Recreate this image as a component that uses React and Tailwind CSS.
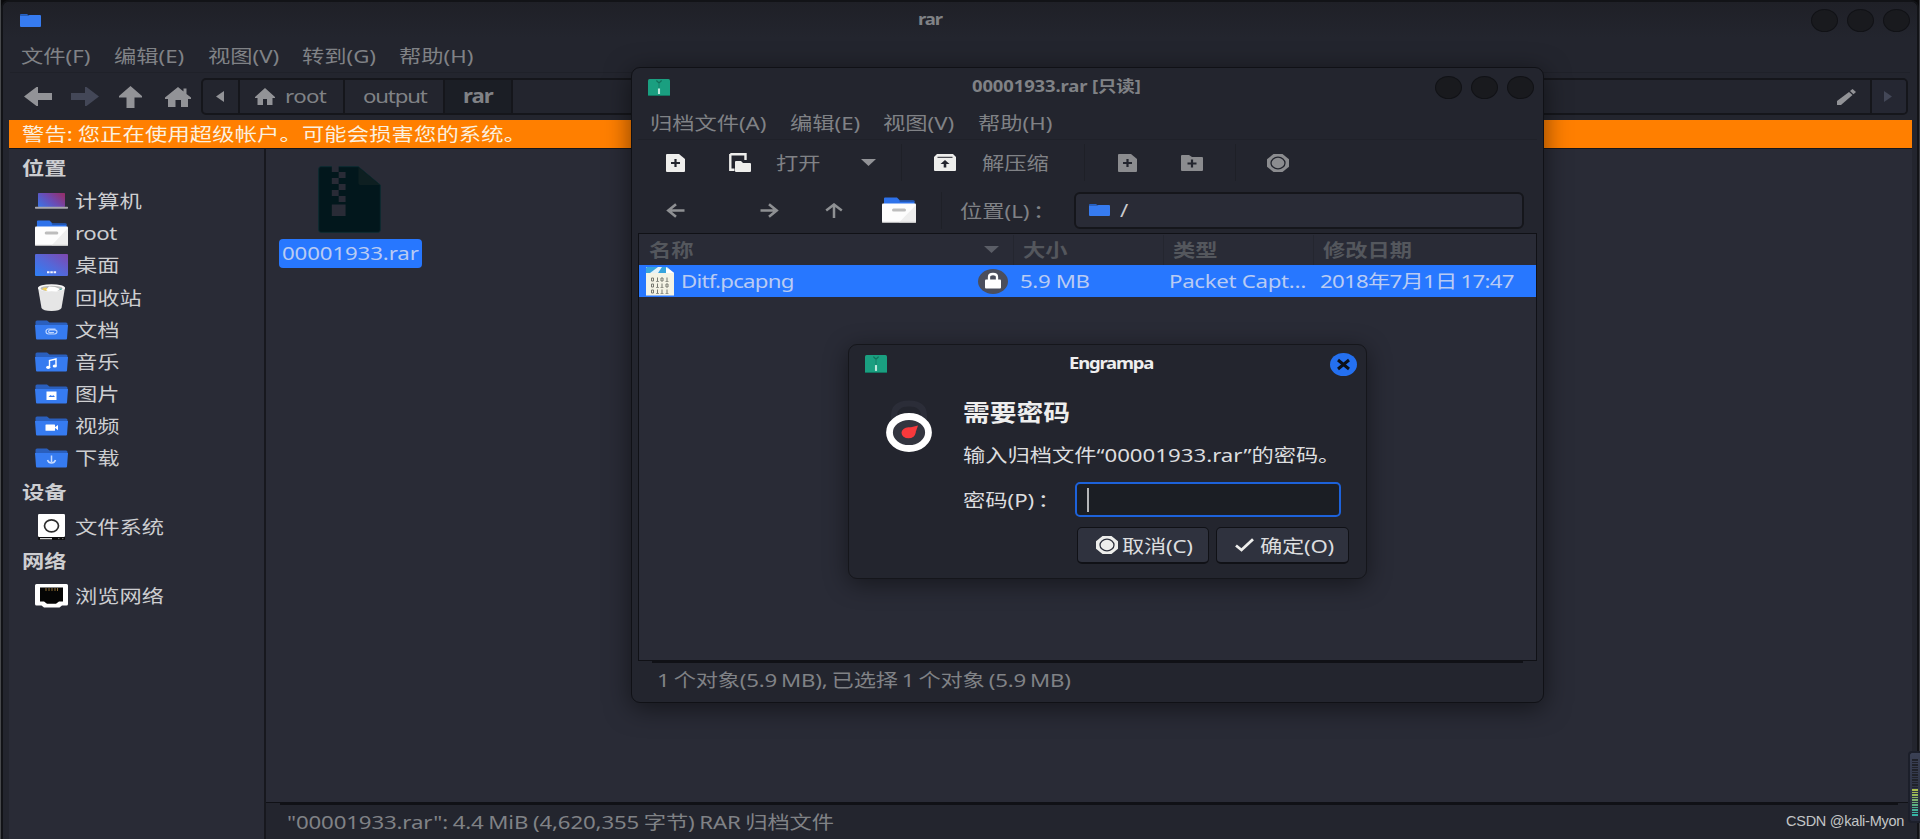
import React from "react";

/* Horizontally widened text used across the desktop. */
function T({ children, className = "" }) {
  return (
    <span className={`block shrink-0 whitespace-nowrap leading-none ${className}`}>
      <span className="block w-max origin-left scale-x-[1.19]">{children}</span>
    </span>
  );
}

function Svg({ className, box, children }) {
  return (
    <svg className={`block shrink-0 ${className}`} viewBox={box} preserveAspectRatio="none">
      {children}
    </svg>
  );
}

function SmallFolder({ className }) {
  return (
    <Svg className={className} box="0 0 21 12">
      <path d="M0 1Q0 0 1 0H7L9 1.5H0Z" fill="#2460c4" />
      <path d="M0 1.5H8L9.5 1H20Q21 1 21 2V11Q21 12 20 12H1Q0 12 0 11Z" fill="#367bf0" />
    </Svg>
  );
}

function ZipIcon({ className }) {
  return (
    <Svg className={className} box="0 0 21 17">
      <rect width="21" height="17" rx="1.5" fill="#1a9f80" />
      <rect y="16" width="21" height="1" rx=".5" fill="#127560" />
      <path d="M8 1.500L10.5 4L13 1.500" fill="none" stroke="#11705a" strokeWidth="1.2" />
      <path d="M10.5 4V9.500" stroke="#168a70" strokeWidth="1.4" />
      <rect x="9.500" y="9.500" width="2" height="5.500" fill="#bfe8dc" />
    </Svg>
  );
}

function HomeFolder({ className }) {
  return (
    <Svg className={className} box="0 0 34 26">
      <path d="M2 10V1.5Q2 .5 3 .5H15L18 3.5H31Q32.500 3.500 32.500 5V10Z" fill="#2e72ea" />
      <path d="M17 3.500H32.500V5H18Z" fill="#2157b4" />
      <rect y="6.500" width="34" height="19" rx="1" fill="#fdfdfd" />
      <path d="M34 8V25.500H17Z" fill="#eeeeee" />
      <rect y="24.800" width="34" height=".9" fill="#c9c9c9" />
      <rect x="10" y="11.500" width="14" height="3" rx="1.500" fill="#bdbdbd" />
    </Svg>
  );
}

function BlueFolder({ children }) {
  return (
    <Svg className="h-[20px] w-[33px]" box="0 0 33 20">
      <path d="M.5 7V2Q.5 .5 2 .5H12L14.500 2.500H31Q32.500 2.500 32.500 4V7Z" fill="#2a5fbd" />
      <path d="M0 5H33L32 18.500Q32 19.500 31 19.500H2Q1 19.500 1 18.500Z" fill="#367bf0" />
      <g>{children}</g>
    </Svg>
  );
}

function ComputerIcon() {
  return (
    <Svg className="h-[16px] w-[33px]" box="0 0 33 16">
      <defs>
        <linearGradient id="pc" x1="0" x2="1" y1=".8" y2=".2">
          <stop offset="0" stopColor="#3f6fe0" />
          <stop offset=".5" stopColor="#6b4bb4" />
          <stop offset="1" stopColor="#92306f" />
        </linearGradient>
      </defs>
      <rect x="3" y="0" width="27" height="14" rx=".8" fill="url(#pc)" />
      <rect y="13.800" width="33" height="1.900" rx=".6" fill="#a8a8ae" />
    </Svg>
  );
}

function DesktopIcon() {
  return (
    <Svg className="h-[22px] w-[33px]" box="0 0 33 22">
      <defs>
        <linearGradient id="dk" x1="0" x2="1" y1="1" y2="0">
          <stop offset="0" stopColor="#2d80f6" />
          <stop offset=".5" stopColor="#5567d8" />
          <stop offset="1" stopColor="#8047ae" />
        </linearGradient>
      </defs>
      <rect width="33" height="22" rx="1" fill="url(#dk)" />
      <path d="M12 18.300H14.500M15.300 18.300H17.800M18.600 18.300H21.100" stroke="#f4f4ff" strokeWidth="2" />
    </Svg>
  );
}

function TrashIcon() {
  return (
    <Svg className="h-[27px] w-[27px]" box="0 0 27 27">
      <path d="M0 3.500H27L23.500 24Q22 27 13.500 27T3.500 24Z" fill="#e6e6e6" />
      <ellipse cx="13.500" cy="4" rx="13.500" ry="3.800" fill="#f7f7f7" />
      <ellipse cx="13.500" cy="4.500" rx="11" ry="2.700" fill="#b9b9b9" />
      <path d="M4 5.500L6 3.500L9 4V7Z" fill="#f2cf57" />
      <path d="M8 6L11 2.500L17 3L22 5L19 7.300H10Z" fill="#ffffff" />
      <path d="M21 5L24 4.500L23 6.300Z" fill="#3fb3a4" />
    </Svg>
  );
}

function DriveIcon() {
  return (
    <Svg className="h-[26px] w-[27px]" box="0 0 27 26">
      <rect y="20" width="27" height="6" rx="1" fill="#0b0b0d" />
      <rect width="27" height="23" rx="1.200" fill="#fff" />
      <rect x="2" y="24" width="12" height="1.300" fill="#d0d0d0" />
      <path d="M20 24.600H21.500M24 24.600H25.500" stroke="#777" />
      <ellipse cx="13.500" cy="11.800" rx="7" ry="6" fill="none" stroke="#2d2d2d" strokeWidth="1.700" />
    </Svg>
  );
}

function NetworkIcon() {
  return (
    <Svg className="h-[24px] w-[33px]" box="0 0 33 24">
      <path d="M1.500 0H31.500Q33 0 33 1.500V20Q33 21.500 31.500 21.500H27L24.500 23.500H9L6.500 21.500H1.500Q0 21.500 0 20V1.500Q0 0 1.500 0Z" fill="#fff" />
      <path d="M5 3.500H28V17.500H24L21 19.800H12L9 17.500H5Z" fill="#050505" />
      <path d="M11 4V7M14 4V7M17 4V7M20 4V7M22.500 4V7" stroke="#8a6a32" strokeWidth="1" />
    </Svg>
  );
}

function ArrowThin({ className }) {
  return (
    <Svg className={className} box="0 0 19 15">
      <path d="M10 1.200L2.300 7.500L10 13.800M2 7.500H18.500" fill="none" stroke="#8e9093" strokeWidth="2.600" />
    </Svg>
  );
}

function StopIcon({ className, fill, gap }) {
  return (
    <Svg className={className} box="0 0 22 18">
      <path d="M6.500 0H15.500L22 5.300V12.700L15.500 18H6.500L0 12.700V5.300Z" fill={fill} />
      <ellipse cx="11" cy="9" rx="7" ry="5.800" fill="none" stroke={gap} strokeWidth="1.300" />
    </Svg>
  );
}

function WinButtons({ className }) {
  return (
    <div className={`flex shrink-0 gap-[9px] ${className}`}>
      <i className="h-[23px] w-[27px] rounded-[50%] border border-[#111216] bg-[#191a1e]" />
      <i className="h-[23px] w-[27px] rounded-[50%] border border-[#111216] bg-[#191a1e]" />
      <i className="h-[23px] w-[27px] rounded-[50%] border border-[#111216] bg-[#191a1e]" />
    </div>
  );
}

function Place({ icon, label, className }) {
  return (
    <div className={`flex shrink-0 items-center ${className}`}>
      <div className="ml-[26px] flex w-[33px] shrink-0 justify-center">{icon}</div>
      <T className="ml-[7px] pt-px">{label}</T>
    </div>
  );
}

function Sidebar() {
  return (
    <div className="flex w-[257px] shrink-0 flex-col border-r-2 border-[#17181e] text-[#cdced1]">
      <div className="mt-[3px] flex h-[32px] shrink-0 items-center">
        <T className="ml-[13px] pt-px font-bold">位置</T>
      </div>
      <Place className="h-[34px]" icon={<ComputerIcon />} label="计算机" />
      <Place className="h-[30px] tracking-[-0.4px]" icon={<HomeFolder className="h-[26px] w-[33px]" />} label="root" />
      <Place className="h-[34px]" icon={<DesktopIcon />} label="桌面" />
      <Place className="h-[31px]" icon={<TrashIcon />} label="回收站" />
      <Place
        className="h-[33px]"
        icon={
          <BlueFolder>
            <path d="M20.500 9H13.500Q11 9.200 11 11.500T13.500 14H19.500Q22 13.700 22 11.800T19.500 9.800L15 10Q13.600 10.300 13.600 11.500T15 12.600L19 12.500" fill="none" stroke="#bcd4ff" strokeWidth="1.200" />
          </BlueFolder>
        }
        label="文档"
      />
      <Place
        className="h-[32px]"
        icon={
          <BlueFolder>
            <path d="M14.500 15V8.500L21 7V13.800" fill="none" stroke="#fff" strokeWidth="1.400" />
            <ellipse cx="13.200" cy="15.300" rx="2.100" ry="1.600" fill="#fff" />
            <ellipse cx="19.800" cy="14" rx="2.100" ry="1.600" fill="#fff" />
          </BlueFolder>
        }
        label="音乐"
      />
      <Place
        className="h-[32px]"
        icon={
          <BlueFolder>
            <rect x="11.500" y="7.500" width="10" height="8.500" fill="#fff" />
            <path d="M13.500 13L15.500 11L17 12L18.500 11.200L20 13Z" fill="#367bf0" />
          </BlueFolder>
        }
        label="图片"
      />
      <Place
        className="h-[32px]"
        icon={
          <BlueFolder>
            <rect x="10.500" y="8.500" width="9.500" height="6.300" rx=".6" fill="#fff" />
            <path d="M19.500 11.500L23 9V14.300Z" fill="#fff" />
          </BlueFolder>
        }
        label="视频"
      />
      <Place
        className="h-[32px]"
        icon={
          <BlueFolder>
            <path d="M16.500 7.500V14M12.500 12Q13.500 15 16.500 15T20.500 12" fill="none" stroke="#c9dcff" strokeWidth="1.500" />
          </BlueFolder>
        }
        label="下载"
      />
      <div className="flex h-[36px] shrink-0 items-center">
        <T className="ml-[13px] pt-px font-bold">设备</T>
      </div>
      <Place className="h-[34px]" icon={<DriveIcon />} label="文件系统" />
      <div className="flex h-[34px] shrink-0 items-center">
        <T className="ml-[13px] pt-px font-bold">网络</T>
      </div>
      <Place className="h-[36px]" icon={<NetworkIcon />} label="浏览网络" />
    </div>
  );
}

function RarFile() {
  return (
    <div className="ml-[13px] mt-[17px] flex w-[143px] flex-col items-center">
      <Svg className="-ml-[3px] h-[67px] w-[63px]" box="0 0 64 67">
        <path d="M3 .7H41L63.300 19V64Q63.300 66.300 61 66.300H3Q.7 66.300 .7 64V3Q.7 .7 3 .7Z" fill="#02171c" stroke="#0c2b30" />
        <path d="M41 1L63 19H43Q41 19 41 17Z" fill="#0e1f21" />
        <path d="M14 -1H21V6H14ZM21 6H28V12H21ZM14 12H21V18H14ZM21 18H28V24H21ZM14 24H21V30H14ZM21 30H28V36H21ZM14 38.500H28V50H14Z" fill="#292b36" />
      </Svg>
      <div className="mt-[6px] flex h-[29px] w-[143px] items-center rounded-[4px] bg-[#2777ff] text-[#b9cbf3]">
        <T className="ml-[3px] tracking-[-0.100px]">00001933.rar</T>
      </div>
    </div>
  );
}

function FileManager() {
  return (
    <div className="flex h-[839px] w-[1918px] flex-col overflow-hidden rounded-t-[8px] border-x-2 border-t-2 border-[#121317] bg-[#23252e] text-[#808286]">
      <div className="flex h-[36px] shrink-0 items-center bg-gradient-to-b from-[#1f2027] to-[#23252e]">
        <SmallFolder className="ml-[17px] h-[13px] w-[21px]" />
        <T className="ml-[877px] w-[23px] text-[15.500px] font-bold tracking-[-0.900px]">rar</T>
        <WinButtons className="ml-[870px]" />
      </div>
      <div className="flex h-[34px] shrink-0 items-center pt-[2px]">
        <T className="ml-[18px] w-[93px]">文件(F)</T>
        <T className="w-[94px]">编辑(E)</T>
        <T className="w-[94px]">视图(V)</T>
        <T className="w-[97px]">转到(G)</T>
        <T>帮助(H)</T>
      </div>
      <div className="ml-[7px] mr-[7px] h-px shrink-0 bg-[#1f2129]" />
      <div className="mt-[5px] flex h-[37px] shrink-0 items-center">
        <Svg className="ml-[21px] h-[19px] w-[28px]" box="0 0 28 19">
          <path d="M0 9.500L12.500 0H14V6H28V13H14V19H12.500Z" fill="#929397" />
        </Svg>
        <Svg className="ml-[19px] h-[19px] w-[28px]" box="0 0 28 19">
          <path d="M28 9.500L15.500 0H14V6H0V13H14V19H15.500Z" fill="#434757" />
        </Svg>
        <Svg className="ml-[20px] h-[22px] w-[23px]" box="0 0 23 22">
          <path d="M11.500 0L23 10V11.500H15.500V22H7.500V11.500H0V10Z" fill="#929397" />
        </Svg>
        <Svg className="ml-[23px] h-[20px] w-[26px]" box="0 0 26 20">
          <path d="M13 0L18.500 4.500V1.500H21.500V7L26 10.500V12H23V20H16V13H10.500V20H3V12H0V10.500Z" fill="#929397" />
        </Svg>
        <div className="ml-[10px] flex h-[37px] w-[1707px] items-stretch overflow-hidden rounded-[5px] border-2 border-[#15161b]">
          <div className="flex w-[37px] items-center border-r-2 border-[#15161b]">
            <Svg className="ml-[13px] h-[11px] w-[8px]" box="0 0 8 11">
              <path d="M8 0V11L0 5.500Z" fill="#929397" />
            </Svg>
          </div>
          <div className="flex w-[105px] items-center border-r-2 border-[#15161b]">
            <Svg className="ml-[15px] h-[17px] w-[20px]" box="0 0 20 17">
              <path d="M10 0L20 9V10H17.500V17H12V11H8V17H2.500V10H0V9Z" fill="#929397" />
            </Svg>
            <T className="ml-[10px] tracking-[-0.500px]">root</T>
          </div>
          <div className="flex w-[100px] items-center border-r-2 border-[#15161b]">
            <T className="ml-[18px] tracking-[-1px]">output</T>
          </div>
          <div className="flex w-[68px] items-center border-r-2 border-[#15161b] bg-[#1b1e25]">
            <T className="ml-[18px] font-bold tracking-[-0.900px]">rar</T>
          </div>
          <div className="flex flex-1 items-center justify-end">
            <Svg className="mr-[14px] h-[16px] w-[19px]" box="0 0 19 16">
              <path d="M0 12L12 3L15.500 6L4 16H0Z" fill="#929397" />
              <path d="M13 2L15.500 0L19 3L16.500 5.200Z" fill="#929397" />
            </Svg>
          </div>
          <div className="flex w-[36px] items-center border-l-2 border-[#15161b] bg-[#252732]">
            <Svg className="ml-[12px] h-[11px] w-[8px]" box="0 0 8 11">
              <path d="M0 0V11L8 5.500Z" fill="#434757" />
            </Svg>
          </div>
        </div>
      </div>
      <div className="mx-[6px] mt-[5px] flex h-[28px] w-[1903px] shrink-0 items-center bg-[#ff7f00] text-[#fbefdf]">
        <T className="ml-[13px] tracking-[0.150px] [word-spacing:-1px]">警告: 您正在使用超级帐户。可能会损害您的系统。</T>
      </div>
      <div className="mx-[6px] flex min-h-0 w-[1903px] flex-1 border-t border-[#15161b] bg-[#292b36]">
        <Sidebar />
        <div className="flex min-w-0 flex-1 flex-col">
          <div className="min-h-0 flex-1">
            <RarFile />
          </div>
          <div className="flex h-[37px] shrink-0 flex-col border-t border-[#101116] bg-[#23252e]">
            <div className="mx-[14px] h-[2px] shrink-0 bg-[#101116]" />
            <T className="ml-[21px] mt-[8px] tracking-[-0.120px] [word-spacing:-0.800px]">"00001933.rar": 4.4 MiB (4,620,355 字节) RAR 归档文件</T>
          </div>
        </div>
      </div>
    </div>
  );
}

function Sep({ className }) {
  return <div className={`h-[37px] w-px shrink-0 bg-[#1e2027] ${className}`} />;
}

function ArchiveWindow() {
  return (
    <div className="absolute left-[631px] top-[67px] flex h-[636px] w-[913px] flex-col rounded-[9px] border border-[#101116] bg-[#23252e] text-[#808286] shadow-[0_5px_26px_rgba(0,0,0,0.5)]">
      <div className="flex h-[38px] shrink-0 items-center">
        <ZipIcon className="ml-[16px] h-[17px] w-[22px]" />
        <T className="ml-[302px] w-[168px] text-[15.500px] font-bold tracking-[-0.100px]">00001933.rar [只读]</T>
        <WinButtons className="ml-[295px]" />
      </div>
      <div className="mt-px flex h-[32px] shrink-0 items-center">
        <T className="ml-[18px] w-[140px]">归档文件(A)</T>
        <T className="w-[93px]">编辑(E)</T>
        <T className="w-[95px]">视图(V)</T>
        <T>帮助(H)</T>
      </div>
      <div className="mx-[6px] h-px shrink-0 bg-[#1f2129]" />
      <div className="mt-[4px] flex h-[37px] shrink-0 items-center">
        <Svg className="ml-[34px] h-[18px] w-[19px]" box="0 0 19 18">
          <path d="M1 0H13L19 5V17Q19 18 18 18H1Q0 18 0 17V1Q0 0 1 0Z" fill="#eeeeec" />
          <path d="M9.500 5V13M5 9H14" stroke="#23252e" strokeWidth="2.200" />
        </Svg>
        <Svg className="ml-[44px] h-[19px] w-[22px]" box="0 0 22 19">
          <path d="M1.300 1.200H16.500V7M1.300 1V16.800H5.500" fill="none" stroke="#eeeeec" strokeWidth="2.400" />
          <path d="M6 9Q6 8 7 8H12L14 10H21Q22 10 22 11V18Q22 19 21 19H7Q6 19 6 18Z" fill="#eeeeec" />
        </Svg>
        <T className="ml-[25px] w-[44px] pt-px">打开</T>
        <Svg className="ml-[41px] h-[7px] w-[15px]" box="0 0 15 7">
          <path d="M0 0H15L7.500 7Z" fill="#929397" />
        </Svg>
        <Sep className="ml-[25px]" />
        <Svg className="ml-[32px] h-[17px] w-[22px]" box="0 0 22 17">
          <path d="M3 0H19L22 3V16Q22 17 21 17H1Q0 17 0 16V3Z" fill="#eeeeec" />
          <path d="M3.500 3.300H18.500" stroke="#23252e" strokeWidth="1" />
          <path d="M11 6L15.500 10H12.300V13.500H9.700V10H6.500Z" fill="#23252e" />
        </Svg>
        <T className="ml-[26px] w-[66px] pt-px">解压缩</T>
        <Sep className="ml-[36px]" />
        <Svg className="ml-[33px] h-[18px] w-[19px]" box="0 0 19 18">
          <path d="M1 0H13L19 5V17Q19 18 18 18H1Q0 18 0 17V1Q0 0 1 0Z" fill="#8b8c8f" />
          <path d="M9.500 5V13M5 9H14" stroke="#23252e" strokeWidth="2.200" />
        </Svg>
        <Svg className="ml-[44px] h-[16px] w-[22px]" box="0 0 22 16">
          <path d="M1 0H8L11 2H21Q22 2 22 3V15Q22 16 21 16H1Q0 16 0 15V1Q0 0 1 0Z" fill="#8b8c8f" />
          <path d="M11 4.500V12.500M6.500 8.500H15.500" stroke="#23252e" strokeWidth="2.200" />
        </Svg>
        <Sep className="ml-[32px]" />
        <StopIcon className="ml-[31px] h-[18px] w-[22px]" fill="#8b8c8f" gap="#23252e" />
      </div>
      <div className="mt-[10px] flex h-[38px] shrink-0 items-center">
        <ArrowThin className="ml-[34px] h-[15px] w-[19px]" />
        <ArrowThin className="ml-[75px] h-[15px] w-[19px] -scale-x-100" />
        <Svg className="ml-[46px] h-[15px] w-[18px]" box="0 0 18 15">
          <path d="M1.200 7.500L9 1.500L16.800 7.500M9 1.500V15" fill="none" stroke="#8e9093" strokeWidth="2.500" />
        </Svg>
        <HomeFolder className="ml-[39px] h-[26px] w-[34px]" />
        <Sep className="ml-[25px]" />
        <T className="ml-[18px] w-[93px] pt-[2px]">位置(L)<span className="ml-[3px]">：</span></T>
        <div className="ml-[21px] flex h-[37px] w-[450px] items-center rounded-[6px] border-2 border-[#15161b] bg-[#292b36]">
          <SmallFolder className="ml-[13px] h-[12px] w-[21px]" />
          <T className="ml-[10px] text-[#c9cacd]">/</T>
        </div>
      </div>
      <div className="mx-[6px] mt-[4px] flex h-[428px] shrink-0 flex-col border-[1.500px] border-[#101116] bg-[#292b36]">
        <div className="flex h-[31px] shrink-0 items-center font-bold text-[#54575d]">
          <T className="ml-[10px] w-[335px] pt-px">名称</T>
          <Svg className="h-[7px] w-[15px]" box="0 0 15 7">
            <path d="M0 0H15L7.500 7Z" fill="#5a5d66" />
          </Svg>
          <div className="ml-[14px] h-[30px] w-px bg-[#24262f]" />
          <T className="ml-[9px] w-[140px] pt-px">大小</T>
          <div className="h-[30px] w-px bg-[#24262f]" />
          <T className="ml-[9px] w-[140px] pt-px">类型</T>
          <div className="h-[30px] w-px bg-[#24262f]" />
          <T className="ml-[9px] pt-px">修改日期</T>
        </div>
        <div className="flex h-[32px] shrink-0 items-center bg-[#2777ff] text-[#b9cbf3]">
          <Svg className="ml-[7px] h-[29px] w-[28px]" box="0 0 28 29">
            <path d="M1 0H21L28 6V28.500H0V1Q0 0 1 0Z" fill="#f4f3e4" />
            <path d="M1 0H21L26 6H0V1Z" fill="#37a4dd" />
            <path d="M4 6L12 0H16L12 6Z" fill="#e4f2f8" />
            <path d="M20 0L28 6H20Z" fill="#ffffff" />
            <g fill="none" stroke="#77786f" strokeWidth="1">
              <path d="M5.500 11h2v3h-2zM15 11h2v3h-2zM5.500 17h2v3h-2zM20 17h2v3h-2zM5.500 23h2v3h-2z" />
              <path d="M11.500 10.500v4M21 10.500v4M11.500 16.500v4M16 16.500v4M11.500 22.500v4M16 22.500v4M21 22.500v4" />
              <path d="M10 14.500h3M19.500 14.500h3M10 20.500h3M14.500 20.500h3M10 26.500h3M14.500 26.500h3M19.500 26.500h3" strokeWidth=".7" />
            </g>
          </Svg>
          <T className="ml-[7px] w-[115px] tracking-[-0.650px]">Ditf.pcapng</T>
          <Svg className="ml-[182px] h-[25px] w-[30px]" box="0 0 30 25">
            <ellipse cx="15" cy="12.500" rx="15" ry="12.500" fill="#4b4e5c" />
            <rect x="7" y="10.500" width="16" height="9" rx="1" fill="#fff" />
            <path d="M11 11V8Q11 5 15 5T19 8V11" fill="none" stroke="#fff" strokeWidth="2.300" />
          </Svg>
          <T className="ml-[12px] w-[149px] tracking-[-0.300px]">5.9 MB</T>
          <T className="w-[151px] tracking-[-0.250px]">Packet Capt…</T>
          <T className="tracking-[-0.600px] [word-spacing:-1px]">2018年7月1日 17:47</T>
        </div>
      </div>
      <div className="mx-[20px] h-[2px] shrink-0 bg-[#101116]" />
      <T className="ml-[25px] mt-[8px] tracking-[-0.180px] [word-spacing:-1.200px]">1 个对象(5.9 MB), 已选择 1 个对象 (5.9 MB)</T>
    </div>
  );
}

function PasswordDialog() {
  return (
    <div className="absolute left-[848px] top-[344px] flex h-[235px] w-[519px] flex-col rounded-[9px] border border-[#15161b] bg-[#23252e] text-[#dcdddf] shadow-[0_5px_24px_rgba(0,0,0,0.45)]">
      <div className="flex h-[38px] shrink-0 items-center">
        <ZipIcon className="ml-[16px] h-[18px] w-[22px]" />
        <T className="ml-[182px] w-[85px] text-[15.500px] font-bold tracking-[-1px] text-[#eeeeee]">Engrampa</T>
        <Svg className="ml-[176px] h-[23px] w-[27px]" box="0 0 27 23">
          <ellipse cx="13.500" cy="11.500" rx="13.500" ry="11.500" fill="#2470f0" />
          <path d="M8 7L19 16M19 7L8 16" stroke="#0c1018" strokeWidth="3" />
        </Svg>
      </div>
      <div className="flex min-h-0 flex-1">
        <Svg className="ml-[37px] mt-[17px] h-[52px] w-[46px]" box="0 0 46 52">
          <path d="M8 24V16Q8 3.500 23 3.500T38 16V24" fill="none" stroke="#2b2d38" strokeWidth="6" />
          <ellipse cx="23" cy="32.500" rx="19.500" ry="16" fill="#33353f" stroke="#fff" strokeWidth="6.800" />
          <ellipse cx="22.500" cy="32.800" rx="7" ry="5.500" fill="#f8393c" />
          <path d="M18 29L32 25.500L29 34Z" fill="#f8393c" />
        </Svg>
        <div className="ml-[31px] flex flex-col">
          <T className="mt-[19px] text-[22.500px] font-bold text-[#eeeeee]">需要密码</T>
          <T className="mt-[21px]">输入归档文件“00001933.rar”的密码。</T>
          <div className="mt-[18px] flex items-center">
            <T className="w-[112px] pt-[2px]">密码(P)<span className="ml-[3px]">：</span></T>
            <div className="flex h-[35px] w-[266px] items-center rounded-[5px] border-2 border-[#1d62da] bg-[#1b1e24]">
              <i className="ml-[10px] h-[24px] w-[2px] bg-[#b5b6b8]" />
            </div>
          </div>
          <div className="mt-[10px] flex gap-[7px] pl-[114px]">
            <div className="flex h-[37px] w-[132px] items-center rounded-[5px] border border-b-2 border-[#101116] bg-[#2f323e]">
              <StopIcon className="ml-[18px] h-[18px] w-[22px]" fill="#eeeeec" gap="#2f323e" />
              <T className="ml-[4px] pt-[2px] tracking-[-0.200px]">取消(C)</T>
            </div>
            <div className="flex h-[37px] w-[133px] items-center rounded-[5px] border border-b-2 border-[#101116] bg-[#2f323e]">
              <Svg className="ml-[18px] h-[14px] w-[19px]" box="0 0 19 14">
                <path d="M1 7.500L6.500 12L18 1.300" fill="none" stroke="#eeeeec" strokeWidth="2.800" />
              </Svg>
              <T className="ml-[6px] pt-[2px] tracking-[-0.200px]">确定(O)</T>
            </div>
          </div>
        </div>
      </div>
    </div>
  );
}

function VolumeMeter() {
  const bars = [
    "bg-[#20222a]", "bg-[#20222a]", "bg-[#20222a]", "bg-[#20222a]", "bg-[#20222a]", "bg-[#20222a]",
    "bg-[#20222a]", "bg-[#20222a]", "bg-[#20222a]", "bg-[#20222a]", "bg-[#20222a]", "bg-[#20222a]",
    "bg-[#a9bf4a]", "bg-[#a2bb50]", "bg-[#96b858]", "bg-[#8ab562]", "bg-[#7ab36c]", "bg-[#6bb076]",
    "bg-[#5bb082]", "bg-[#4db08c]", "bg-[#43b196]", "bg-[#3bb39f]", "bg-[#35b4a6]",
  ];
  return (
    <div className="absolute left-[1908px] top-[751px] flex h-[72px] w-[12px] flex-col items-center rounded-l-[4px] border-2 border-r-0 border-[#1c1f2a] bg-gradient-to-b from-[#3b4155] to-[#262a3a] pr-[1px] pt-[6px]">
      {bars.map((c, i) => (
        <i key={i} className={`mb-px h-[1.500px] w-[6px] shrink-0 ${c}`} />
      ))}
    </div>
  );
}

export default function App() {
  return (
    <div className="relative h-[839px] w-[1920px] overflow-hidden bg-[#0a0a0c] px-px font-['Noto_Sans','Noto_Sans_CJK_SC',sans-serif] text-[18.700px]">
      <FileManager />
      <i className="absolute left-0 top-0 h-full w-px bg-[#47494c]" />
      <i className="absolute right-0 top-0 h-full w-px bg-[#3a3b40]" />
      <ArchiveWindow />
      <PasswordDialog />
      <VolumeMeter />
      <span className="absolute left-[1786px] top-[813px] whitespace-nowrap font-['Liberation_Sans',Arial,sans-serif] text-[14.500px] leading-[16px] tracking-[-0.250px] text-[#c4c5c7]">
        CSDN @kali-Myon
      </span>
    </div>
  );
}
